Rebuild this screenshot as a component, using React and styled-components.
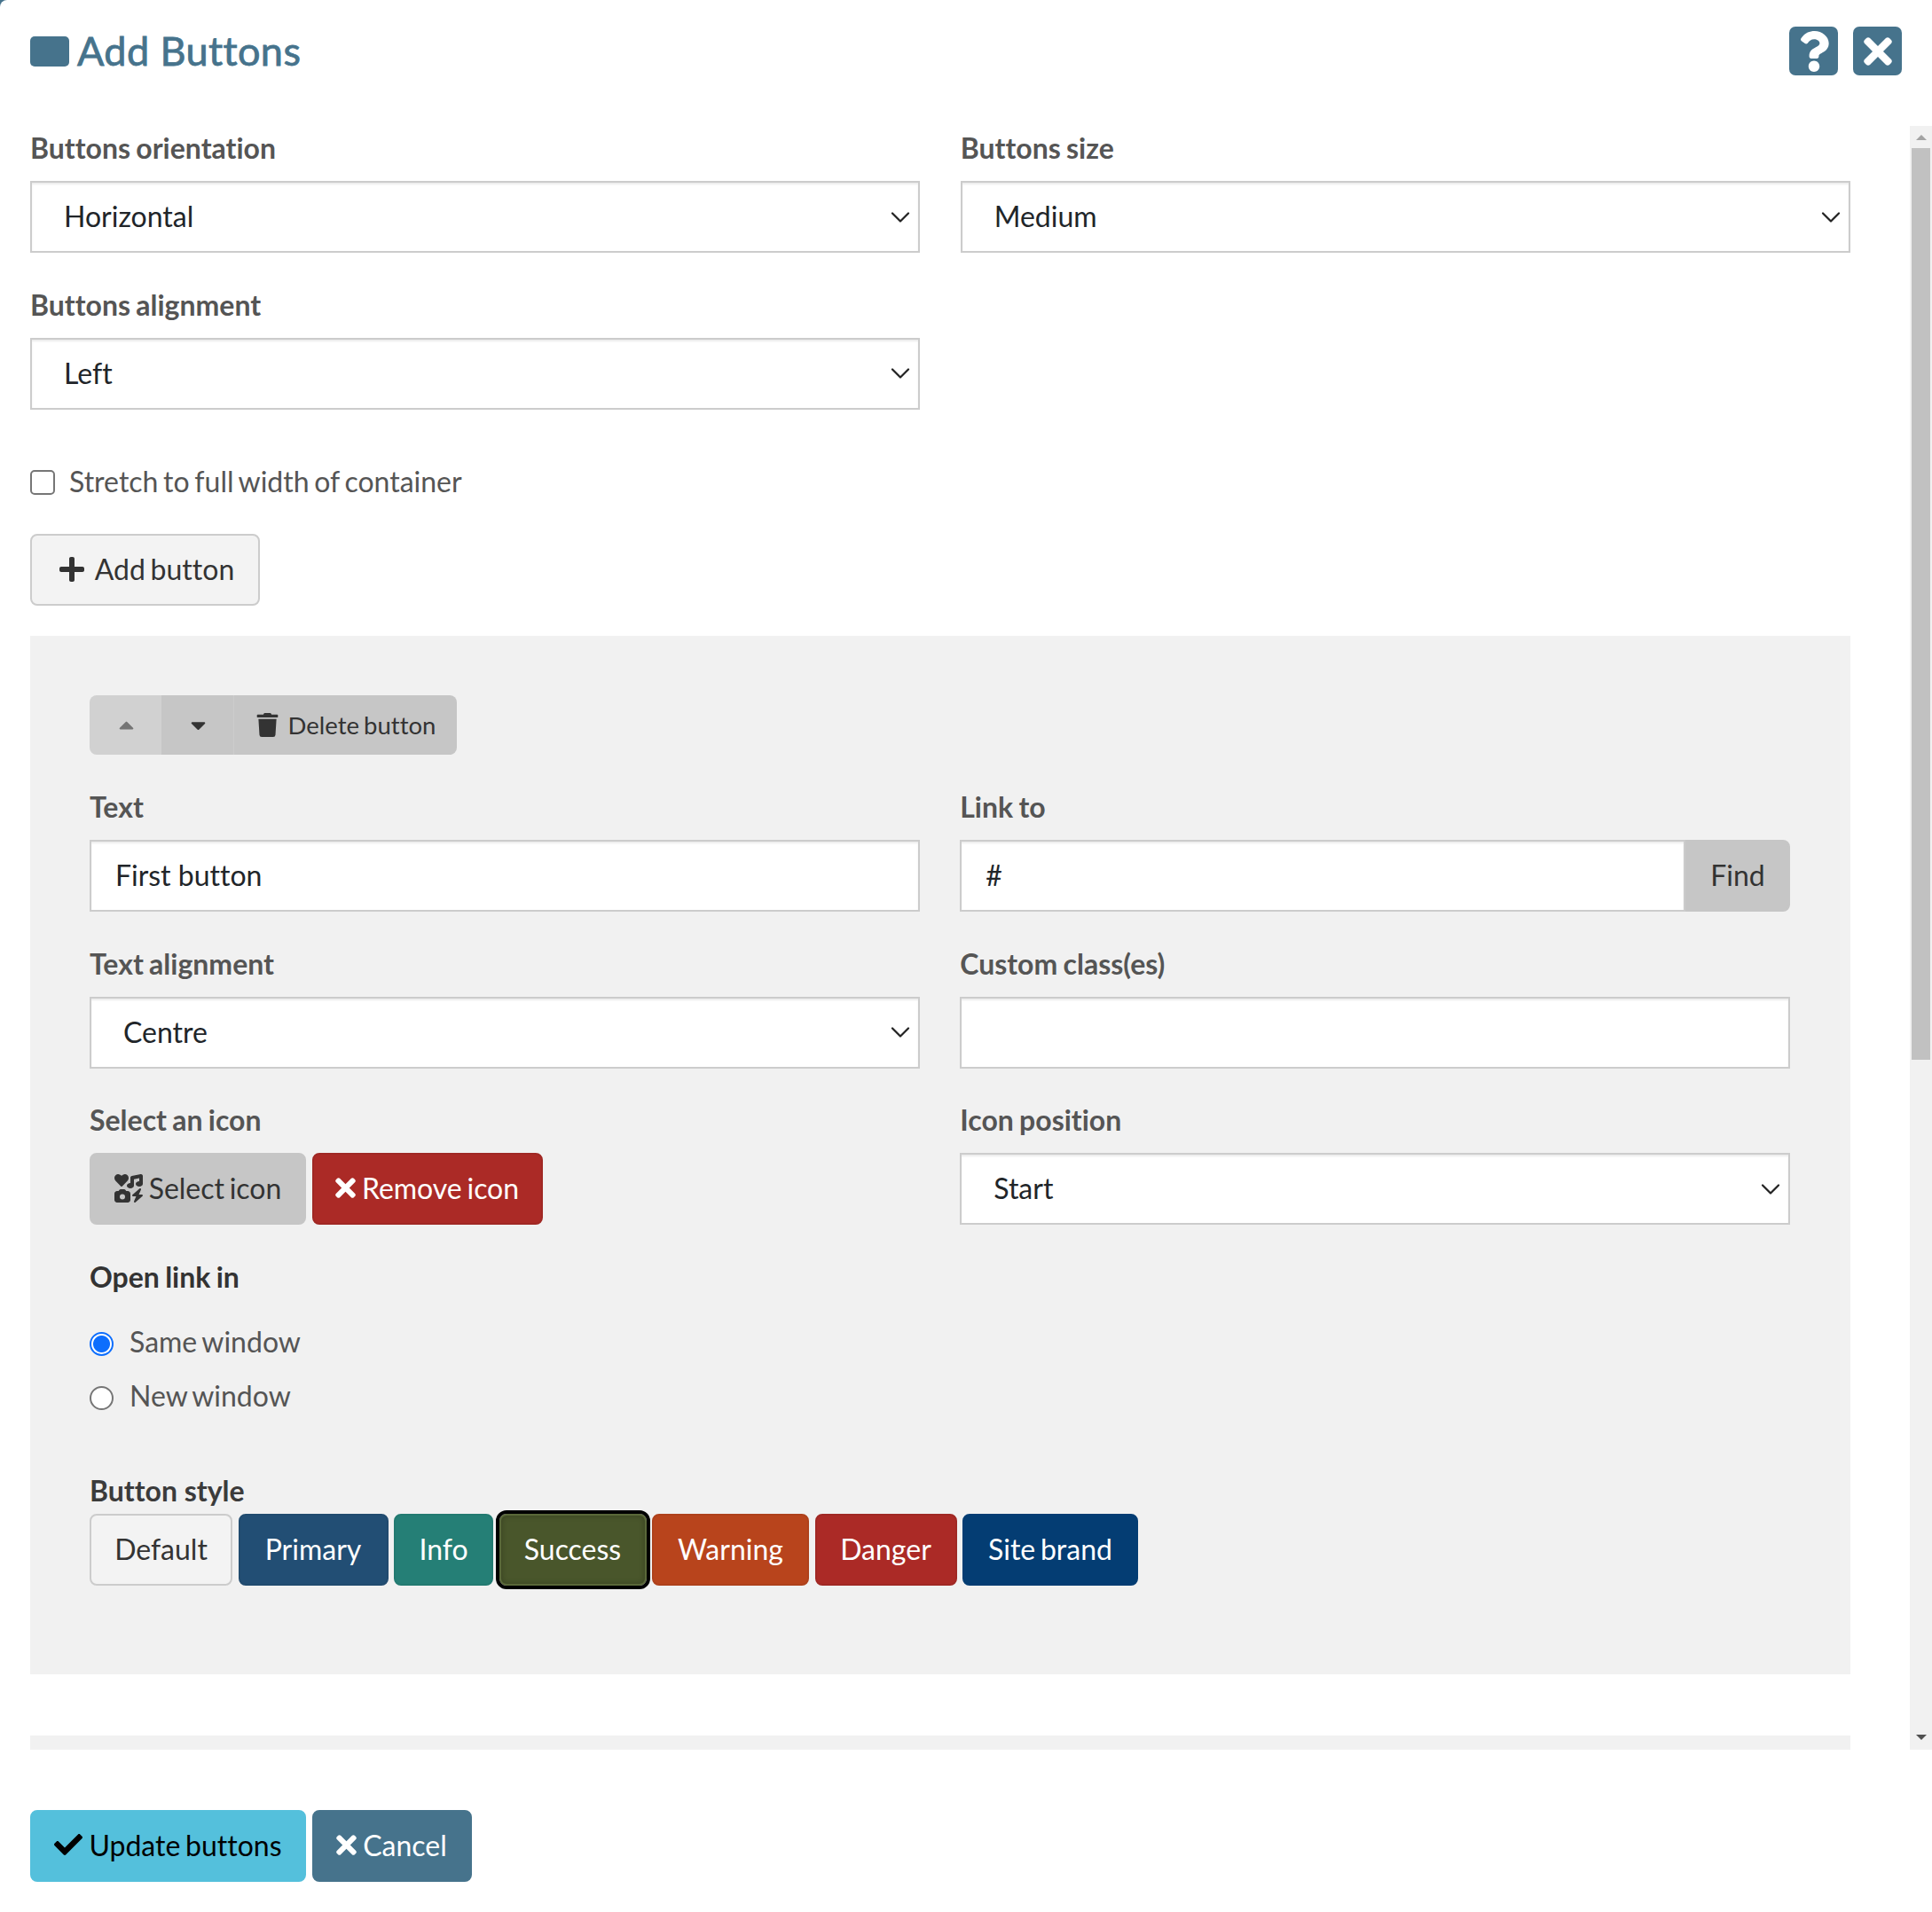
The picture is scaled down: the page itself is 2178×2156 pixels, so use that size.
import React from 'react';
import styled, { createGlobalStyle } from 'styled-components';
import { FaCaretUp, FaCaretDown, FaCheck, FaPlus, FaQuestion, FaTimes, FaTrash } from 'react-icons/fa';
import { FaIcons } from 'react-icons/fa6';

const chevron = `url("data:image/svg+xml,%3csvg xmlns='http://www.w3.org/2000/svg' viewBox='0 0 16 16'%3e%3cpath fill='none' stroke='%23222' stroke-width='1.5' stroke-linecap='round' stroke-linejoin='round' d='m2 5 6 6 6-6'/%3e%3c/svg%3e")`;

const GlobalStyle = createGlobalStyle`
  * { box-sizing: border-box; }
  body {
    margin: 0;
    background: #fff;
    font-family: Lato, "Open Sans", sans-serif;
    font-size: 32px;
    line-height: 48px;
    font-variant-ligatures: none;
    color: #212529;
  }
  button, input, select { font-variant-ligatures: none; }
`;

const App = () => {
  return (
    <>
      <GlobalStyle />
      <Page>
        <Sheet>
          <Header>
            <Title>
              <TitleIcon />
              Add Buttons
            </Title>
            <HeaderActions>
              <SquareBtn aria-label="Help"><FaQuestion /></SquareBtn>
              <SquareBtn aria-label="Close"><FaTimes /></SquareBtn>
            </HeaderActions>
          </Header>

          <ScrollArea>
            <ScrollContent>
              <Grid>
                <Field>
                  <Label>Buttons orientation</Label>
                  <Select defaultValue="Horizontal"><option>Horizontal</option></Select>
                </Field>
                <Field>
                  <Label>Buttons size</Label>
                  <Select defaultValue="Medium"><option>Medium</option></Select>
                </Field>
                <Field>
                  <Label>Buttons alignment</Label>
                  <Select defaultValue="Left"><option>Left</option></Select>
                </Field>
              </Grid>

              <CheckRow>
                <Checkbox type="checkbox" />
                <RowText>Stretch to full width of container</RowText>
              </CheckRow>

              <AddRow>
                <Btn $w="259px" $gap="12px" $bg="#f3f3f3" $border="#ccc" $color="#333">
                  <PlusIcon />
                  Add button
                </Btn>
              </AddRow>

              <Panel>
                <Toolbar>
                  <ToolBtn $disabled><FaCaretUp /></ToolBtn>
                  <ToolBtn><FaCaretDown /></ToolBtn>
                  <ToolBtn $wide><FaTrash />Delete button</ToolBtn>
                </Toolbar>

                <Grid>
                  <Field>
                    <Label>Text</Label>
                    <Input defaultValue="First button" />
                  </Field>
                  <Field>
                    <Label>Link to</Label>
                    <InputGroup>
                      <Input defaultValue="#" />
                      <FindBtn>Find</FindBtn>
                    </InputGroup>
                  </Field>
                  <Field>
                    <Label>Text alignment</Label>
                    <Select defaultValue="Centre"><option>Centre</option></Select>
                  </Field>
                  <Field>
                    <Label>Custom class(es)</Label>
                    <Input />
                  </Field>
                  <Field>
                    <Label>Select an icon</Label>
                    <BtnRow>
                      <Btn $w="244px" $gap="7px" $bg="#c6c6c6" $border="#c6c6c6" $color="#333">
                        <FaIcons size={32} />
                        Select icon
                      </Btn>
                      <Btn $w="260px" $gap="7px" $bg="#ab2a26" $border="#a02824" $color="#fff">
                        <CrossIcon />
                        Remove icon
                      </Btn>
                    </BtnRow>
                  </Field>
                  <Field>
                    <Label>Icon position</Label>
                    <Select defaultValue="Start"><option>Start</option></Select>
                  </Field>
                </Grid>

                <GroupTitle>Open link in</GroupTitle>
                <RadioRow>
                  <Radio type="radio" name="target" defaultChecked />
                  <RowText>Same window</RowText>
                </RadioRow>
                <RadioRow>
                  <Radio type="radio" name="target" />
                  <RowText>New window</RowText>
                </RadioRow>

                <StyleTitle>Button style</StyleTitle>
                <BtnRow>
                  <Btn $w="161px" $bg="#f3f3f3" $border="#ccc" $color="#333">Default</Btn>
                  <Btn $w="169px" $bg="#224e74" $border="#214b6f" $color="#fff">Primary</Btn>
                  <Btn $w="112px" $bg="#257f76" $border="#237a71" $color="#fff">Info</Btn>
                  <SelectedBtn $w="166px" $bg="#49562b" $border="#5a6839" $color="#fff">Success</SelectedBtn>
                  <Btn $w="177px" $bg="#b8441c" $border="#ae411b" $color="#fff">Warning</Btn>
                  <Btn $w="160px" $bg="#ab2a26" $border="#a02824" $color="#fff">Danger</Btn>
                  <Btn $w="198px" $bg="#043d73" $border="#043d73" $color="#fff">Site brand</Btn>
                </BtnRow>
              </Panel>

              <NextPanel />
            </ScrollContent>

            <ScrollTrack>
              <ArrowUp />
              <ScrollThumb />
              <ArrowDown />
            </ScrollTrack>
          </ScrollArea>

          <Footer>
            <Btn $w="311px" $gap="7px" $bg="#54c0dc" $border="#54c0dc" $color="#000">
              <FaCheck size={32} />
              Update buttons
            </Btn>
            <Btn $w="180px" $gap="7px" $bg="#46738c" $border="#46738c" $color="#fff">
              <CrossIcon />
              Cancel
            </Btn>
          </Footer>
        </Sheet>
      </Page>
    </>
  );
};

export default App;

const Page = styled.div`
  width: 2178px;
  height: 2156px;
  overflow: hidden;
  background: #46738c;
`;
const Sheet = styled.div`
  height: 100%;
  border-top-left-radius: 8px;
  background: #fff;
`;
const Header = styled.header`
  height: 142px;
  padding: 30px 34px 0;
  display: flex;
  justify-content: space-between;
  align-items: flex-start;
`;
const Title = styled.h1`
  margin: 0;
  height: 55px;
  display: flex;
  align-items: center;
  gap: 9px;
  font-size: 45px;
  line-height: 55px;
  font-weight: 400;
  letter-spacing: 0.4px;
  -webkit-text-stroke: 0.8px #46738c;
  color: #46738c;
`;
const TitleIcon = styled.span`
  width: 44px;
  height: 34px;
  border-radius: 5px;
  background: #46738c;
`;
const HeaderActions = styled.div`
  display: flex;
  gap: 17px;
`;
const SquareBtn = styled.button`
  width: 55px;
  height: 55px;
  padding: 0;
  border: 0;
  border-radius: 7px;
  background: #46738c;
  color: #fff;
  font-size: 46px;
  display: flex;
  align-items: center;
  justify-content: center;
`;
const ScrollArea = styled.div`
  height: 1831px;
  display: flex;
  overflow: hidden;
`;
const ScrollContent = styled.div`
  flex: 1;
  padding: 1px 67px 0 34px;
  overflow: hidden;
`;
const ScrollTrack = styled.div`
  width: 25px;
  flex: none;
  display: flex;
  flex-direction: column;
  align-items: center;
  background: #f1f1f1;
`;
const ScrollThumb = styled.div`
  width: 21px;
  height: 1028px;
  background: #c1c1c1;
`;
const ArrowUp = styled.div`
  width: 0;
  height: 0;
  margin: 10px 0 9px;
  border-left: 6px solid transparent;
  border-right: 6px solid transparent;
  border-bottom: 6px solid #a3a3a3;
`;
const ArrowDown = styled.div`
  width: 0;
  height: 0;
  margin-top: auto;
  margin-bottom: 11px;
  border-left: 6px solid transparent;
  border-right: 6px solid transparent;
  border-top: 6px solid #505050;
`;
const Grid = styled.div`
  display: grid;
  grid-template-columns: 1fr 1fr;
  column-gap: 45.5px;
  row-gap: 34.5px;
`;
const Field = styled.div`
  min-width: 0;
`;
const Label = styled.label`
  display: block;
  margin-bottom: 13px;
  font-weight: 700;
  word-spacing: -1.5px;
  color: #555;
`;
const controlBase = `
  display: block;
  width: 100%;
  height: 81px;
  border: 2px solid #ccc;
  border-radius: 0;
  background-color: #fff;
  box-shadow: inset 0 2px 2px rgba(0, 0, 0, 0.075);
  font-family: inherit;
  font-size: 32px;
  color: #212529;
  outline: none;
`;
const Select = styled.select`
  ${controlBase}
  appearance: none;
  padding: 0 50px 2px 36px;
  background-image: ${chevron};
  background-repeat: no-repeat;
  background-position: right 8px center;
  background-size: 24px 24px;
`;
const Input = styled.input`
  ${controlBase}
  padding: 0 27px 2px;
`;
const InputGroup = styled.div`
  display: flex;
  ${Input} {
    flex: 1;
    min-width: 0;
  }
`;
const FindBtn = styled.button`
  flex: none;
  width: 118px;
  height: 81px;
  padding: 0 0 2px;
  border: 2px solid #c6c6c6;
  border-radius: 0 8px 8px 0;
  background: #c6c6c6;
  color: #333;
  font-family: inherit;
  font-size: 32px;
`;
const RowText = styled.span`
  padding-bottom: 2px;
  word-spacing: -2.5px;
  color: #555;
`;
const CheckRow = styled.label`
  margin-top: 58px;
  height: 48px;
  display: flex;
  align-items: center;
  gap: 16px;
`;
const Checkbox = styled.input`
  appearance: none;
  flex: none;
  width: 28px;
  height: 28px;
  margin: 1px 0 0;
  border: 2px solid #767676;
  border-radius: 5px;
  background: #fff;
`;
const AddRow = styled.div`
  margin-top: 34.5px;
`;
const Btn = styled.button`
  width: ${({ $w }) => $w};
  height: 81px;
  padding: 0 0 2px;
  display: inline-flex;
  align-items: center;
  justify-content: center;
  gap: ${({ $gap }) => $gap || '0'};
  border: 2px solid ${({ $border }) => $border};
  border-radius: 8px;
  background: ${({ $bg }) => $bg};
  color: ${({ $color }) => $color};
  font-family: inherit;
  font-size: 32px;
  word-spacing: -2.5px;
  white-space: nowrap;
`;
const SelectedBtn = styled(Btn)`
  outline: 4px solid #000;
  outline-offset: 0;
  box-shadow: inset 0 0 6px rgba(0, 0, 0, 0.25);
`;
const PlusIcon = styled(FaPlus)`
  width: 28px;
  height: 32px;
  margin-left: 4px;
`;
const CrossIcon = styled(FaTimes)`
  width: 23px;
  height: 33px;
`;
const BtnRow = styled.div`
  display: flex;
  gap: 6.5px;
`;
const Panel = styled.section`
  margin-top: 34px;
  padding: 67px 68px 100px 67px;
  background: #f1f1f1;
`;
const Toolbar = styled.div`
  display: inline-flex;
  height: 67px;
  margin-bottom: 35px;
  border-radius: 8px;
  overflow: hidden;
  vertical-align: top;
`;
const ToolBtn = styled.button`
  width: ${({ $wide }) => ($wide ? '252px' : '81px')};
  height: 67px;
  padding: 0;
  display: flex;
  align-items: center;
  justify-content: center;
  gap: 10px;
  border: 0;
  border-left: 1px solid ${({ $wide }) => ($wide ? '#cdcdcd' : 'transparent')};
  background: ${({ $disabled }) => ($disabled ? '#d1d1d1' : '#c6c6c6')};
  color: ${({ $disabled }) => ($disabled ? '#757575' : '#333')};
  font-family: inherit;
  font-size: 27.5px;
  word-spacing: -2px;
  svg { font-size: 27px; }
`;
const GroupTitle = styled.div`
  margin-top: 35px;
  font-weight: 700;
  word-spacing: -1.5px;
  color: #333;
`;
const RadioRow = styled.label`
  margin-top: 13px;
  height: 48px;
  display: flex;
  align-items: center;
  gap: 18px;
  ${GroupTitle} + & {
    margin-top: 26px;
  }
`;
const Radio = styled.input`
  appearance: none;
  flex: none;
  width: 27px;
  height: 27px;
  margin: 2px 0 0;
  border: 2px solid #767676;
  border-radius: 50%;
  background: #fff;
  &:checked {
    border-color: #0d6efd;
    background: radial-gradient(circle, #0d6efd 0 9px, #fff 10px);
  }
`;
const StyleTitle = styled.div`
  margin-top: 58px;
  margin-bottom: 2px;
  font-weight: 700;
  color: #3b3b3b;
`;
const NextPanel = styled.div`
  margin-top: 69px;
  height: 100px;
  background: #f1f1f1;
`;
const Footer = styled.footer`
  padding: 67.5px 0 0 34px;
  display: flex;
  gap: 6.5px;
`;
